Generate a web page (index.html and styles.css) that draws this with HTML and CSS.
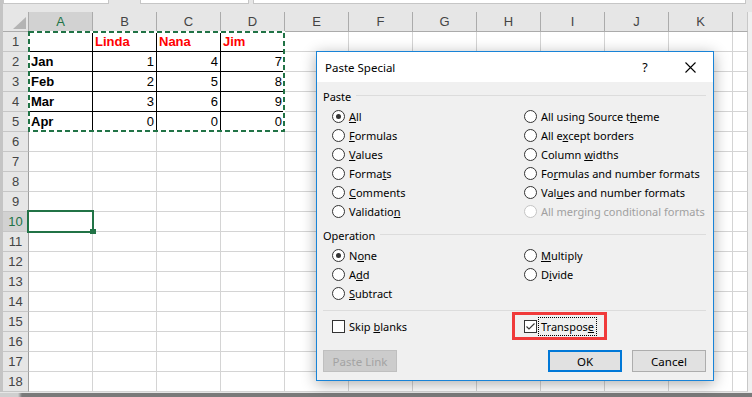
FILE: index.html
```html
<!DOCTYPE html>
<html>
<head>
<meta charset="utf-8">
<link rel="stylesheet" href="styles.css">
</head>
<body>
<div class="app">
  <div class="topbar">
    <span class="fbox fb1"></span><span class="fbox fb2"></span><span class="fbox fb3"></span>
  </div>
  <div class="sheet">
    <div class="row hdr">
      <span class="corner"><svg width="13" height="12" viewBox="0 0 13 12"><polygon points="13,0 13,12 0,12" fill="#b4b4b4"/></svg></span>
      <span class="ch sel">A</span><span class="ch">B</span><span class="ch">C</span><span class="ch">D</span><span class="ch">E</span><span class="ch">F</span><span class="ch">G</span><span class="ch">H</span><span class="ch">I</span><span class="ch">J</span><span class="ch">K</span><span class="ch"></span>
    </div>
    <div class="row"><span class="rh">1</span><span class="k"></span><span class="k t red">Linda</span><span class="k t red">Nana</span><span class="k t red">Jim</span><span></span><span></span><span></span><span></span><span></span><span></span><span></span><span></span></div>
    <div class="row"><span class="rh">2</span><span class="k t">Jan</span><span class="k n">1</span><span class="k n">4</span><span class="k n">7</span><span></span><span></span><span></span><span></span><span></span><span></span><span></span><span></span></div>
    <div class="row"><span class="rh">3</span><span class="k t">Feb</span><span class="k n">2</span><span class="k n">5</span><span class="k n">8</span><span></span><span></span><span></span><span></span><span></span><span></span><span></span><span></span></div>
    <div class="row"><span class="rh">4</span><span class="k t">Mar</span><span class="k n">3</span><span class="k n">6</span><span class="k n">9</span><span></span><span></span><span></span><span></span><span></span><span></span><span></span><span></span></div>
    <div class="row"><span class="rh">5</span><span class="k t">Apr</span><span class="k n">0</span><span class="k n">0</span><span class="k n">0</span><span></span><span></span><span></span><span></span><span></span><span></span><span></span><span></span></div>
    <div class="row"><span class="rh">6</span><span></span><span></span><span></span><span></span><span></span><span></span><span></span><span></span><span></span><span></span><span></span><span></span></div>
    <div class="row"><span class="rh">7</span><span></span><span></span><span></span><span></span><span></span><span></span><span></span><span></span><span></span><span></span><span></span><span></span></div>
    <div class="row"><span class="rh">8</span><span></span><span></span><span></span><span></span><span></span><span></span><span></span><span></span><span></span><span></span><span></span><span></span></div>
    <div class="row"><span class="rh">9</span><span></span><span></span><span></span><span></span><span></span><span></span><span></span><span></span><span></span><span></span><span></span><span></span></div>
    <div class="row"><span class="rh sel">10</span><span></span><span></span><span></span><span></span><span></span><span></span><span></span><span></span><span></span><span></span><span></span><span></span></div>
    <div class="row"><span class="rh">11</span><span></span><span></span><span></span><span></span><span></span><span></span><span></span><span></span><span></span><span></span><span></span><span></span></div>
    <div class="row"><span class="rh">12</span><span></span><span></span><span></span><span></span><span></span><span></span><span></span><span></span><span></span><span></span><span></span><span></span></div>
    <div class="row"><span class="rh">13</span><span></span><span></span><span></span><span></span><span></span><span></span><span></span><span></span><span></span><span></span><span></span><span></span></div>
    <div class="row"><span class="rh">14</span><span></span><span></span><span></span><span></span><span></span><span></span><span></span><span></span><span></span><span></span><span></span><span></span></div>
    <div class="row"><span class="rh">15</span><span></span><span></span><span></span><span></span><span></span><span></span><span></span><span></span><span></span><span></span><span></span><span></span></div>
    <div class="row"><span class="rh">16</span><span></span><span></span><span></span><span></span><span></span><span></span><span></span><span></span><span></span><span></span><span></span><span></span></div>
    <div class="row"><span class="rh">17</span><span></span><span></span><span></span><span></span><span></span><span></span><span></span><span></span><span></span><span></span><span></span><span></span></div>
    <div class="row"><span class="rh">18</span><span></span><span></span><span></span><span></span><span></span><span></span><span></span><span></span><span></span><span></span><span></span><span></span></div>
  </div>
  <div class="bottombar"></div>

  <svg class="ants" width="257" height="102" viewBox="0 0 257 102">
    <rect x="1" y="1" width="255" height="99" fill="none" stroke="#ffffff" stroke-width="2"/>
    <rect x="1" y="1" width="255" height="99" fill="none" stroke="#217346" stroke-width="2" stroke-dasharray="5 3"/>
  </svg>
  <div class="cursel"><span class="handle"></span></div>

  <div class="dialog">
    <div class="titlebar">
      <span class="title">Paste Special</span>
      <span class="help">?</span>
      <span class="close"><svg width="11" height="11" viewBox="0 0 11 11"><path d="M0.5 0.5 L10.5 10.5 M10.5 0.5 L0.5 10.5" stroke="#000" stroke-width="1.1" fill="none"/></svg></span>
    </div>
    <div class="dbody">
      <div class="ghead"><span>Paste</span><i class="gline"></i></div>
      <div class="opts six">
        <div class="opt"><span class="radio on"></span><span><u>A</u>ll</span></div>
        <div class="opt"><span class="radio"></span><span>All using Source t<u>h</u>eme</span></div>
        <div class="opt"><span class="radio"></span><span><u>F</u>ormulas</span></div>
        <div class="opt"><span class="radio"></span><span>All e<u>x</u>cept borders</span></div>
        <div class="opt"><span class="radio"></span><span><u>V</u>alues</span></div>
        <div class="opt"><span class="radio"></span><span>Column <u>w</u>idths</span></div>
        <div class="opt"><span class="radio"></span><span>Forma<u>t</u>s</span></div>
        <div class="opt"><span class="radio"></span><span>Fo<u>r</u>mulas and number formats</span></div>
        <div class="opt"><span class="radio"></span><span><u>C</u>omments</span></div>
        <div class="opt"><span class="radio"></span><span>Val<u>u</u>es and number formats</span></div>
        <div class="opt"><span class="radio"></span><span>Validatio<u>n</u></span></div>
        <div class="opt off"><span class="radio"></span><span>All merging conditional formats</span></div>
      </div>
      <div class="ghead op"><span>Operation</span><i class="gline"></i></div>
      <div class="opts three">
        <div class="opt"><span class="radio on"></span><span>N<u>o</u>ne</span></div>
        <div class="opt"><span class="radio"></span><span><u>M</u>ultiply</span></div>
        <div class="opt"><span class="radio"></span><span>A<u>d</u>d</span></div>
        <div class="opt"><span class="radio"></span><span>D<u>i</u>vide</span></div>
        <div class="opt"><span class="radio"></span><span><u>S</u>ubtract</span></div>
        <div class="opt"></div>
      </div>
      <div class="sep"></div>
      <div class="checks">
        <div class="opt"><span class="cbox"></span><span>Skip <u>b</u>lanks</span></div>
        <div class="opt tr">
          <span class="cbox"><svg width="11" height="11" viewBox="0 0 11 11"><path d="M1.5 5.5 L4 8 L9.5 2.5" stroke="#333" stroke-width="1.1" fill="none"/></svg></span>
          <span class="focus">Transpos<u>e</u></span>
          <span class="mark"></span>
        </div>
      </div>
      <div class="buttons">
        <button class="btn dis" disabled>Paste Link</button>
        <span class="spacer"></span>
        <button class="btn ok">OK</button>
        <button class="btn">Cancel</button>
      </div>
    </div>
  </div>
</div>
</body>
</html>
```

FILE: styles.css
```css
* { box-sizing: border-box; }
html, body { margin: 0; padding: 0; }
body { width: 752px; height: 397px; overflow: hidden; background: #fff; }

.app {
  position: relative;
  width: 752px;
  height: 397px;
  background: #ffffff;
  font-family: "Liberation Sans", Arial, sans-serif;
}

.topbar {
  height: 12px;
  background: #e6e6e6;
  display: flex;
  align-items: flex-start;
  border-left: 3px solid #c4c4c4;
}
.fbox { height: 4px; background: #fff; border: 1px solid #c6c6c6; border-top: 0; }
.fb1 { width: 106px; }
.fb2 { width: 109px; margin-left: 31px; }
.fb3 { width: 493px; margin-left: 4px; }

.sheet {
  border-left: 3px solid #c4c4c4;
  border-right: 4px solid #f0f0f0;
}

.row {
  display: grid;
  grid-template-columns: 26px repeat(11, 64px) 1fr;
  height: 20px;
}
.row > span {
  border-right: 1px solid #d4d4d4;
  border-bottom: 1px solid #d4d4d4;
  font-size: 13px;
  line-height: 20px;
  padding: 0 2px;
  white-space: nowrap;
  overflow: hidden;
  color: #000;
}
.row > span:last-child { border-right-color: #c8c8c8; }

.hdr > span {
  background: #e6e6e6;
  border-right-color: #ababab;
  border-bottom-color: #ababab;
  text-align: center;
  color: #444;
  font-size: 13px;
  line-height: 19px;
}
.hdr > .sel { background: #d2d2d2; color: #217346; }
.corner { position: relative; }
.corner svg { position: absolute; right: 2px; bottom: 2px; }

.rh {
  background: #e6e6e6;
  text-align: center;
  color: #444 !important;
  border-right-color: #9e9e9e !important;
  border-bottom-color: #c6c6c6 !important;
  padding: 0 !important;
}
.rh.sel { background: #d2d2d2; color: #217346 !important; }

.row > .k { border-right-color: #000; border-bottom-color: #000; }
.t { font-weight: bold; }
.red { color: #ff0000 !important; }
.n { text-align: right; }

.bottombar {
  height: 5px;
  border-top: 1px solid #e6e6e6;
  background: linear-gradient(to right, #cfcfcf 0, #cfcfcf 18px, #7a7a7a 22px, #7a7a7a 100%);
}

.ants { position: absolute; left: 28px; top: 31px; }
.cursel {
  position: absolute;
  left: 27px;
  top: 210px;
  width: 67px;
  height: 23px;
  border: 2px solid #217346;
}
.handle {
  position: absolute;
  right: -4px;
  bottom: -3px;
  width: 6px;
  height: 5px;
  background: #217346;
}

/* Dialog */
.dialog {
  position: absolute;
  left: 316px;
  top: 51px;
  width: 398px;
  height: 330px;
  border: 1px solid #1883d7;
  background: #f0f0f0;
  box-shadow: 0 3px 14px rgba(0, 0, 0, 0.32);
  font-family: "Noto Sans", "Open Sans", sans-serif;
  font-size: 11px;
  color: #000;
  display: flex;
  flex-direction: column;
}
.titlebar {
  height: 30px;
  background: #fff;
  display: flex;
  align-items: center;
  padding-left: 8px;
  padding-right: 1px;
}
.title { flex: 1; font-size: 11.5px; }
.help { width: 30px; margin-right: 8px; text-align: center; font-size: 12.5px; }
.close { width: 44px; height: 30px; display: flex; align-items: center; justify-content: center; }

.dbody {
  flex: 1;
  padding: 4px 7px 8px 6px;
  display: flex;
  flex-direction: column;
}
.ghead {
  height: 20px;
  display: flex;
  align-items: center;
  margin-bottom: 1px;
}
.ghead.op { margin-top: 4px; }
.gline { flex: 1; height: 1px; background: #dcdcdc; margin-left: 5px; margin-top: -1px; }

.opts {
  display: grid;
  grid-template-columns: 192px 1fr;
  grid-auto-rows: 19px;
  padding-left: 9px;
}
.opt { display: flex; align-items: center; gap: 4px; white-space: nowrap; }
.opt.off { color: #a0a0a0; }
.radio {
  width: 13px;
  height: 13px;
  border-radius: 50%;
  border: 1px solid #333;
  background: #fff;
  flex: none;
  display: flex;
  align-items: center;
  justify-content: center;
}
.off .radio { border-color: #c4c4c4; }
.radio.on::after {
  content: "";
  width: 5px;
  height: 5px;
  border-radius: 50%;
  background: #333;
}

.sep { height: 1px; background: #dcdcdc; margin-top: 7px; }

.checks {
  display: grid;
  grid-template-columns: 192px 1fr;
  height: 20px;
  margin-top: 5px;
  padding-left: 9px;
}
.cbox {
  width: 13px;
  height: 13px;
  border: 1px solid #333;
  background: #fff;
  flex: none;
  display: flex;
  align-items: center;
  justify-content: center;
}
.tr { position: relative; gap: 2px; }
.focus { outline: 1px dotted #000; padding: 1px 2px; }
.mark {
  position: absolute;
  left: -12px;
  top: -4px;
  width: 95px;
  height: 28px;
  border: 3px solid #f03a3a;
}

.buttons {
  display: flex;
  margin-top: 14px;
  gap: 10px;
}
.spacer { flex: 1; }
.btn {
  width: 74px;
  height: 22px;
  border: 1px solid #adadad;
  background: #e1e1e1;
  font: inherit;
  font-size: 11.5px;
  color: #000;
  padding: 0;
}
.btn.ok { border: 2px solid #0078d7; }
.btn.dis { background: #cccccc; border-color: #bfbfbf; color: #a3a3a3; }
```
